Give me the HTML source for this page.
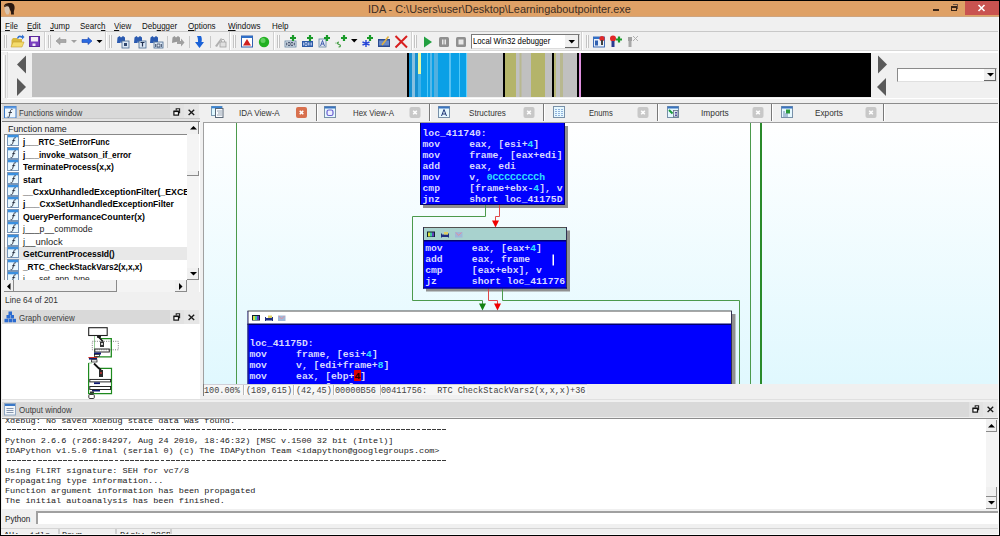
<!DOCTYPE html>
<html><head><meta charset="utf-8">
<style>
*{margin:0;padding:0;box-sizing:border-box}
html,body{width:1000px;height:536px;overflow:hidden;background:#f0f0f0}
body{position:relative;font-family:"Liberation Sans",sans-serif;font-size:9px;color:#000}
.a{position:absolute}
.ui{font-family:"Liberation Sans",sans-serif;white-space:nowrap}
.mono{font-family:"Liberation Mono",monospace;white-space:pre}
.sx{transform:scaleX(0.85);transform-origin:0 0}
.menu{font-size:9.8px;line-height:11px;color:#111;transform:scaleX(0.817);transform-origin:0 0}
.tb{top:32px;width:2px;height:18px;border-left:1px solid #d0d0d0;border-right:1px solid #fff}
.grip{top:35px;width:3px;height:13px;border-left:1px solid #c4c4c4;border-right:1px solid #c4c4c4;background:#fcfcfc}
.sep{top:36px;width:1px;height:12px;background:#c8c8c8}
.tsep{top:104px;width:2px;height:17px;border-left:1px solid #787878;border-right:1px solid #fff}
.sfs{top:385px;width:2px;height:10px;border-left:1px solid #b8b8b8;border-right:1px solid #fff}
.g{font-family:"Liberation Mono",monospace;white-space:pre;font-size:9.72px;line-height:11px;color:#d8d8ff;font-weight:bold}
.g .c{color:#30e0ff}
.st{font-size:8.53px;line-height:10px;color:#444}
.out{font-size:8.53px;line-height:10px;color:#222}
.fr{font-size:9.4px;line-height:12px}

</style></head><body>
<!-- TITLE BAR -->
<div class="a" style="left:1px;top:1px;width:998px;height:16px;background:#dfa166"></div>
<svg class="a" style="left:2px;top:2px" width="14" height="14" viewBox="0 0 14 14">
 <path d="M2 4.5 C2 1.5 6 0.5 9 1 C12 1.5 13 4 12.5 7 C12 9 11.5 10 12 12.5 L9 12.5 C9.5 10 8.5 8 7 7 Z" fill="#2a1810"/>
 <path d="M3 4 C5 3 7 4 7.5 6.5 C8 9 7.5 11 6.5 12.5 L4.5 12.5 C3.5 11 2.5 9 2.5 7 Z" fill="#d8c4b0"/>
 <path d="M2.5 4.5 C3.5 2.5 6 2.5 7.5 4 L6 4.5 C5 4 4 4.2 3 5Z" fill="#3a2418"/>
</svg>
<div class="a ui" style="left:368px;top:2px;font-size:10.9px;color:#3a2c22;line-height:14px">IDA - C:\Users\user\Desktop\Learningaboutpointer.exe</div>
<div class="a" style="left:933px;top:9px;width:6px;height:2px;background:#3a2618"></div>
<div class="a" style="left:951px;top:6px;width:6px;height:5px;border:1px solid #3a2618;border-top-width:2px"></div>
<div class="a" style="left:953px;top:4px;width:5px;height:5px;border-top:1px solid #6a5040;border-right:1px solid #6a5040"></div>
<div class="a" style="left:965px;top:1px;width:34px;height:14px;background:#c95350"></div>
<svg class="a" style="left:977px;top:4px" width="9" height="8" viewBox="0 0 9 8"><path d="M1.5 1 L7.5 7 M7.5 1 L1.5 7" stroke="#fff" stroke-width="1.6"/></svg>
<div class="a" style="left:1px;top:16px;width:998px;height:1px;background:#cfa47e"></div>
<!-- MENU -->
<div class="a" style="left:1px;top:17px;width:997px;height:14px;background:#f0f0f0"></div>
<div class="a ui menu" style="left:5px;top:19.6px"><u>F</u>ile</div>
<div class="a ui menu" style="left:27px;top:19.6px"><u>E</u>dit</div>
<div class="a ui menu" style="left:50px;top:19.6px"><u>J</u>ump</div>
<div class="a ui menu" style="left:80px;top:19.6px">Searc<u>h</u></div>
<div class="a ui menu" style="left:114px;top:19.6px"><u>V</u>iew</div>
<div class="a ui menu" style="left:142px;top:19.6px">Deb<u>u</u>gger</div>
<div class="a ui menu" style="left:188px;top:19.6px"><u>O</u>ptions</div>
<div class="a ui menu" style="left:228px;top:19.6px"><u>W</u>indows</div>
<div class="a ui menu" style="left:272px;top:19.6px">Help</div>
<!-- TOOLBAR -->
<div class="a" style="left:1px;top:31px;width:997px;height:1px;background:#c8c8c8"></div>
<div class="a" style="left:1px;top:32px;width:997px;height:19px;background:#f0f0f0"></div>
<div class="a" style="left:1px;top:50px;width:997px;height:1px;background:#d8d8d8"></div>
<div class="a" style="left:1px;top:51px;width:997px;height:1px;background:#fff"></div>

<!-- toolbar boundaries -->
<div class="a tb" style="left:44px"></div>
<div class="a tb" style="left:105px"></div>
<div class="a tb" style="left:229px"></div>
<div class="a tb" style="left:273px"></div>
<div class="a tb" style="left:411px"></div>
<div class="a tb" style="left:581px"></div>
<div class="a grip" style="left:4px"></div>
<div class="a grip" style="left:48px"></div>
<div class="a grip" style="left:109px"></div>
<div class="a grip" style="left:233px"></div>
<div class="a grip" style="left:277px"></div>
<div class="a grip" style="left:414px"></div>
<div class="a grip" style="left:586px"></div>
<div class="a sep" style="left:167px"></div>
<div class="a sep" style="left:189px"></div>
<div class="a sep" style="left:210px"></div>
<svg class="a" style="left:0;top:31px" width="1000" height="20" viewBox="0 31 1000 20">
 <!-- open folder -->
 <path d="M11.5 40 L13 38 L17 38 L18 39 L22 39 L22 47 L11.5 47Z" fill="#d8b840"/>
 <path d="M11 47 L13 42 L24 42 L22 47Z" fill="#f4dc6c" stroke="#c8a030" stroke-width="0.6"/>
 <path d="M17 38 C18 35 20 35 22 36 L22 34.5 L24.5 37 L22 39.5 L22 38 C20 37 19 37 18 39Z" fill="#3070d0"/>
 <!-- save -->
 <rect x="29" y="36" width="11" height="11" fill="#7a3ec0"/>
 <rect x="31" y="37" width="7" height="4.5" fill="#f4ecf4"/>
 <rect x="32.5" y="43.5" width="3" height="2.5" fill="#f0e8f8"/>
 <rect x="29.5" y="36.5" width="10" height="10" fill="none" stroke="#5a2898" stroke-width="1"/>
 <!-- back gray -->
 <path d="M56 41 L60 37.5 L60 39.5 L66 39.5 L66 42.5 L60 42.5 L60 44.5Z" fill="#a8a8a8" stroke="#909090" stroke-width="0.6"/>
 <path d="M71 40 L77 40 L74 43Z" fill="#a0a0a0"/>
 <!-- forward blue -->
 <path d="M92 41 L88 37.5 L88 39.5 L82 39.5 L82 42.5 L88 42.5 L88 44.5Z" fill="#2a6ae0" stroke="#1040b0" stroke-width="0.6"/>
 <path d="M96.5 40 L102.5 40 L99.5 43Z" fill="#000"/>
 <!-- binoculars x3 -->
 <g id="bino">
 <path d="M117 43 L117.5 37.5 L119.5 36 L121 37.5 L123 36 L125 37.5 L125 43 L121.5 43 L121 41 L120.5 43Z" fill="#2a5ab0"/>
 <rect x="122" y="41" width="7" height="7" fill="#dde8f4" stroke="#4a6a90" stroke-width="0.8"/>
 <rect x="124" y="43" width="3" height="3" fill="#304870"/>
 </g>
 <path d="M134 43 L134.5 37.5 L136.5 36 L138 37.5 L140 36 L142 37.5 L142 43 L138.5 43 L138 41 L137.5 43Z" fill="#2a5ab0"/>
 <rect x="139" y="41" width="7" height="7" fill="#dde8f4" stroke="#4a6a90" stroke-width="0.8"/>
 <path d="M140.5 42.5 L144.5 42.5 M142.5 42.5 L142.5 46.5" stroke="#203050" stroke-width="1.2"/>
 <path d="M150 43 L150.5 37.5 L152.5 36 L154 37.5 L156 36 L158 37.5 L158 43 L154.5 43 L154 41 L153.5 43Z" fill="#2a5ab0"/>
 <rect x="154" y="42" width="9" height="6" fill="#dde8f4" stroke="#4a6a90" stroke-width="0.8"/>
 <path d="M155.5 44 L155.5 47 M157 44 L160 44 L160 47 L157 47Z M161.5 44 L161.5 47" stroke="#203050" stroke-width="0.7" fill="none"/>
 <!-- gray arrow icon -->
 <path d="M172 43 L172.5 37.5 L174.5 36 L176 37.5 L178 36 L180 37.5 L180 41Z" fill="#9a9a9a"/>
 <path d="M177 41 L181 41 L181 38.5 L184.5 42.5 L181 46.5 L181 44 L177 44Z" fill="#a0a0a0"/>
 <!-- blue down arrow -->
 <path d="M197 36 L201 36 C202 38 202 40 201.5 42 L204 42 L199.5 48 L195 42 L198 42 C198 40 198 38 197 36Z" fill="#1a62d8"/>
 <!-- gray lock -->
 <path d="M215 46 L221 38 L222 39 L217 47Z" fill="#b0b0b0"/>
 <rect x="220" y="42" width="6" height="5" fill="#e0e0e0" stroke="#a0a0a0" stroke-width="0.8"/>
 <path d="M221.5 42 L221.5 40.5 C221.5 39 224.5 39 224.5 40.5 L224.5 42" stroke="#a0a0a0" fill="none" stroke-width="0.8"/>
 <!-- window red triangle -->
 <rect x="241.5" y="36" width="11" height="11" fill="#fff" stroke="#3060b0" stroke-width="1"/>
 <rect x="241.5" y="36" width="11" height="2" fill="#3070c8"/>
 <path d="M247 39 L251 45.5 L243 45.5Z" fill="#d02020"/>
 <!-- green circle -->
 <circle cx="264" cy="42" r="5.2" fill="#22b022"/>
 <circle cx="263" cy="40.5" r="2.5" fill="#7ee07e" opacity="0.7"/>
 <!-- 1001 w plus -->
 <rect x="285" y="41" width="11" height="6" fill="#e8eef4" stroke="#6080a0" stroke-width="0.8"/>
 <path d="M286.5 42.5 L286.5 45.5 M288 42.5 L290 42.5 L290 45.5 L288 45.5Z M291 42.5 L293 42.5 L293 45.5 L291 45.5Z M294.5 42.5 L294.5 45.5" stroke="#203050" stroke-width="0.7" fill="none"/>
 <path d="M293 35 L293 41 M290 38 L296 38" stroke="#1a9a2a" stroke-width="2.2"/>
 <rect x="302" y="41" width="11" height="6" fill="#2a5aa8"/>
 <path d="M303.5 42.5 L303.5 45.5 M305 42.5 L307 42.5 L307 45.5 L305 45.5Z M308.5 42.5 L308.5 45.5 M310 42.5 L310 45.5 M311.5 42.5 L311.5 45.5" stroke="#e0e8ff" stroke-width="0.7" fill="none"/>
 <path d="M310 35 L310 41 M307 38 L313 38" stroke="#1a9a2a" stroke-width="2.2"/>
 <rect x="319" y="39" width="7" height="8" fill="#e8eef4" stroke="#6080a0" stroke-width="0.8"/>
 <path d="M320.5 46 L322.5 40.5 L324.5 46 M321.3 44 L323.7 44" stroke="#2040a0" stroke-width="0.8" fill="none"/>
 <path d="M327 35 L327 41 M324 38 L330 38" stroke="#1a9a2a" stroke-width="2.2"/>
 <path d="M339 42 C337 42 337 44 339 44.5 C341 45 341 47 338.5 47" stroke="#3a9a3a" stroke-width="1.2" fill="none"/>
 <circle cx="336" cy="43" r="0.6" fill="#3a9a3a"/>
 <path d="M344 35 L344 41 M341 38 L347 38" stroke="#1a9a2a" stroke-width="2.2"/>
 <path d="M351 39 L357.5 39 L354.2 42.5Z" fill="#000"/>
 <path d="M366 40 L366 47 M362.5 42 L369.5 45 M362.5 45 L369.5 42" stroke="#2848d8" stroke-width="1.4"/>
 <path d="M370 35 L370 41 M367 38 L373 38" stroke="#1a9a2a" stroke-width="2.2"/>
 <rect x="378" y="39" width="12" height="8" fill="#2a4a90"/>
 <rect x="379" y="40.5" width="10" height="5" fill="#6888c8"/>
 <path d="M382 45 L388.5 36.5" stroke="#e0b040" stroke-width="1.6"/>
 <path d="M395.5 36 L407 47.5 M407 36 L395.5 47.5" stroke="#d82020" stroke-width="2"/>
 <!-- play pause stop -->
 <path d="M424 36.5 L432 42 L424 47.5Z" fill="#22a040"/>
 <rect x="439" y="37" width="10" height="10" rx="1.5" fill="#909090"/>
 <rect x="442" y="39.5" width="1.5" height="5" fill="#e8e8e8"/><rect x="444.5" y="39.5" width="1.5" height="5" fill="#e8e8e8"/>
 <rect x="456" y="37" width="10" height="10" rx="1.5" fill="#909090"/>
 <rect x="458.5" y="39.5" width="5" height="5" fill="#e8e8e8"/>
 <!-- debugger icons -->
 <rect x="593.5" y="37" width="11" height="10" fill="#e8f0fa" stroke="#3060b0" stroke-width="0.9"/>
 <rect x="593.5" y="37" width="11" height="2" fill="#3070c8"/>
 <rect x="595" y="40.5" width="3" height="5" fill="#3060b0"/>
 <circle cx="602" cy="38.5" r="2.6" fill="#e02828"/>
 <rect x="601" y="40" width="2" height="5" fill="#404040"/>
 <circle cx="613" cy="38.5" r="3" fill="#e02828"/>
 <rect x="611.5" y="41" width="3" height="6" fill="#2a3a90"/>
 <path d="M619 36.5 L619 42.5 M616 39.5 L622 39.5" stroke="#1a9a2a" stroke-width="2.2"/>
 <rect x="628" y="37" width="4" height="4" fill="#a0a0a0"/>
 <rect x="628.5" y="41" width="3" height="6" fill="#a8a8a8"/>
 <path d="M633 36 L638 41 M638 36 L633 41" stroke="#b0b0b0" stroke-width="1"/>
</svg>
<!-- combobox -->
<div class="a" style="left:471px;top:34px;width:109px;height:15px;background:#fff;border:1px solid #7a7a7a;border-right-color:#dcdcdc;border-bottom-color:#dcdcdc"></div>
<div class="a ui" style="left:472.5px;top:36px;font-size:9.2px;line-height:11px;color:#000;transform:scaleX(0.84);transform-origin:0 0">Local Win32 debugger</div>
<div class="a" style="left:565px;top:35px;width:14px;height:13px;background:#f0f0f0;border-right:1px solid #696969;border-bottom:1px solid #696969"></div>
<svg class="a" style="left:568px;top:40px" width="8" height="4"><path d="M0.5 0 L7 0 L3.75 3.5Z" fill="#000"/></svg>

<!-- NAV BAND -->
<div class="a" style="left:1px;top:52px;width:997px;height:51px;background:#f0f0f0"></div>
<div class="a" style="left:3px;top:55px;width:3px;height:43px;border-left:1px solid #fff;border-right:1px solid #c8c8c8"></div>
<div class="a" style="left:7px;top:52px;width:991px;height:1px;background:#fff"></div>
<div class="a" style="left:7px;top:52px;width:1px;height:47px;background:#dcdcdc"></div>
<div class="a" style="left:7px;top:98px;width:991px;height:1px;background:#fff"></div>
<svg class="a" style="left:0;top:52px" width="1000" height="50" viewBox="0 52 1000 50">
 <path d="M26 55.5 L26 73.5 L17 64.5Z" fill="#5a5a5a"/>
 <path d="M17 78 L17 96 L26 87Z" fill="#5a5a5a"/>
 <path d="M878 55.5 L878 73.5 L887 64.5Z" fill="#5a5a5a"/>
 <path d="M886 78 L886 96 L877 87Z" fill="#5a5a5a"/>
 <rect x="32" y="53" width="839" height="44" fill="#c0c0c0"/>
 <rect x="407" y="53" width="2" height="44" fill="#000"/>
 <rect x="409" y="53" width="58" height="44" fill="#0aa0e6"/>
 <rect x="409" y="53" width="3" height="44" fill="#1890d0"/>
 <rect x="412" y="53" width="3" height="44" fill="#88c0e0"/>
 <rect x="415" y="53" width="3" height="44" fill="#1890d0"/>
 <rect x="418" y="53" width="3" height="21" fill="#e8f8a0"/>
 <rect x="418" y="74" width="3" height="23" fill="#40b0e8"/>
 <rect x="427" y="53" width="1" height="44" fill="#50c8f8"/>
 <rect x="430" y="53" width="2" height="44" fill="#58b8e8"/>
 <rect x="434" y="53" width="4" height="44" fill="#50b0e0"/>
 <rect x="449" y="53" width="2" height="44" fill="#58c0f0"/>
 <rect x="459" y="53" width="1" height="44" fill="#50c8f8"/>
 <rect x="466" y="53" width="1" height="44" fill="#60d0ff"/>
 <rect x="503" y="53" width="2" height="44" fill="#000"/>
 <rect x="505" y="53" width="11" height="44" fill="#b4b46a"/>
 <rect x="519.5" y="53" width="2" height="44" fill="#b8b890"/>
 <rect x="531" y="53" width="14" height="44" fill="#b4b46a"/>
 <rect x="552" y="53" width="2" height="44" fill="#000"/>
 <rect x="554" y="53" width="2" height="44" fill="#b8b878"/>
 <rect x="560" y="53" width="3" height="44" fill="#b8b890"/>
 <rect x="577" y="53" width="2" height="44" fill="#000"/>
 <rect x="579" y="53" width="2" height="44" fill="#e090e0"/>
 <rect x="581" y="53" width="290" height="44" fill="#000"/>
</svg>
<div class="a" style="left:897px;top:68px;width:100px;height:14px;background:#fff;border:1px solid #8a8a8a;border-right-color:#e0e0e0;border-bottom-color:#e0e0e0"></div>
<div class="a" style="left:984px;top:69px;width:12px;height:12px;background:#f0f0f0;border-right:1px solid #696969;border-bottom:1px solid #696969"></div>
<svg class="a" style="left:987px;top:73px" width="7" height="4"><path d="M0 0 L7 0 L3.5 3.5Z" fill="#000"/></svg>
<div class="a" style="left:1px;top:103px;width:997px;height:1px;background:#8c8c8c"></div>

<!-- LEFT DOCK -->
<div class="a" style="left:1px;top:104px;width:201px;height:296px;background:#f0f0f0"></div>
<!-- Functions title -->
<div class="a" style="left:2px;top:104px;width:197px;height:14.5px;background:#d9d9d9"></div>
<div class="a" style="left:170px;top:104px;width:14px;height:14.5px;background:#e2e2e2"></div>
<div class="a" style="left:184px;top:104px;width:15px;height:14.5px;background:#e6e6e6"></div>
<svg class="a" style="left:4px;top:106px" width="13" height="13" viewBox="0 0 13 13">
 <rect x="0.5" y="0.5" width="11.5" height="11.5" fill="#eef6fc" stroke="#3a78c8" stroke-width="1"/>
 <rect x="0.5" y="0.5" width="11.5" height="2" fill="#5a98e0"/>
 <path d="M8.5 3.5 C7 3 6.5 4 6.2 6 L5.2 10.5 C5 11.5 4 11.5 3.5 11 M4.5 6.5 L8 6.5" stroke="#303848" stroke-width="0.9" fill="none"/>
</svg>
<div class="a ui sx" style="left:19px;top:106.5px;font-size:9.4px;line-height:12px;color:#3c3c3c">Functions window</div>
<svg class="a" style="left:173px;top:108px" width="8" height="8" viewBox="0 0 8 8"><path d="M3.2 2.6 L3.2 0.8 L6.6 0.8 L6.6 4.6 L5.4 4.6" fill="none" stroke="#222" stroke-width="1.1"/><rect x="0.9" y="3.2" width="4.6" height="3.9" fill="#fff" stroke="#111" stroke-width="1.2"/><rect x="0.9" y="2.8" width="4.6" height="1.3" fill="#111"/></svg>
<svg class="a" style="left:188px;top:109px" width="7" height="7" viewBox="0 0 7 7"><path d="M0.6 0.8 L6.2 6 M6.2 0.8 L0.6 6" stroke="#1a1a1a" stroke-width="1.35"/></svg>
<div class="a" style="left:2px;top:118px;width:198px;height:1px;background:#c8c8c8"></div><div class="a" style="left:2px;top:119px;width:198px;height:2px;background:#e4e4e4"></div><div class="a" style="left:2px;top:121px;width:198px;height:1px;background:#7c7c7c"></div>
<!-- list area -->
<div class="a" style="left:2px;top:122px;width:198px;height:171px;background:#f0f0f0"></div><div class="a" style="left:4px;top:122px;width:196px;height:171px;background:#fff;border-left:1px solid #909090"></div>
<div class="a" style="left:4px;top:122px;width:183px;height:13px;background:#f0f0f0;border-bottom:1px solid #888"></div>
<div class="a ui" style="left:8px;top:123px;font-size:9.4px;line-height:12px;color:#222;transform:scaleX(0.948);transform-origin:0 0">Function name</div>
<div class="a" style="left:187px;top:122px;width:12px;height:13px;background:#f0f0f0;border-right:1px solid #8a8a8a;border-bottom:1px solid #8a8a8a"></div>
<svg class="a" style="left:190px;top:126px" width="7" height="4"><path d="M0 3.5 L7 3.5 L3.5 0Z" fill="#000"/></svg>
<div class="a" style="left:187px;top:134px;width:12px;height:146px;background:#f4f4f4"></div>
<div class="a" style="left:187px;top:171px;width:12px;height:5px;background:#f0f0f0;border-right:1px solid #8a8a8a;border-bottom:1px solid #8a8a8a"></div>
<div class="a" style="left:187px;top:268px;width:12px;height:12px;background:#f0f0f0;border-right:1px solid #8a8a8a;border-bottom:1px solid #8a8a8a"></div>
<svg class="a" style="left:190px;top:272px" width="7" height="4"><path d="M0 0 L7 0 L3.5 3.5Z" fill="#000"/></svg>
<div id="rows" class="a" style="left:4px;top:134px;width:183px;height:145.5px;overflow:hidden"><svg class="a" style="left:3px;top:0.30px" width="12" height="12" viewBox="0 0 12 12"><rect x="0.5" y="0.5" width="11" height="11" fill="#eaf8ff" stroke="#7896b8" stroke-width="1"/><rect x="1" y="1" width="10" height="2.3" fill="#3a90e0"/><path d="M8.9 4 C8.2 3.4 7.3 3.6 7 4.6 L5.6 9.6 C5.3 10.6 4.5 10.9 3.6 10.4" stroke="#20283a" stroke-width="0.9" fill="none"/><path d="M5.2 6.6 L8.2 6.6" stroke="#20283a" stroke-width="0.8"/></svg>
<div class="a ui fr" style="left:19px;top:2.30px;font-weight:bold;color:#000;transform:scaleX(0.843);transform-origin:0 0">j___RTC_SetErrorFunc</div>
<svg class="a" style="left:3px;top:12.72px" width="12" height="12" viewBox="0 0 12 12"><rect x="0.5" y="0.5" width="11" height="11" fill="#eaf8ff" stroke="#7896b8" stroke-width="1"/><rect x="1" y="1" width="10" height="2.3" fill="#3a90e0"/><path d="M8.9 4 C8.2 3.4 7.3 3.6 7 4.6 L5.6 9.6 C5.3 10.6 4.5 10.9 3.6 10.4" stroke="#20283a" stroke-width="0.9" fill="none"/><path d="M5.2 6.6 L8.2 6.6" stroke="#20283a" stroke-width="0.8"/></svg>
<div class="a ui fr" style="left:19px;top:14.72px;font-weight:bold;color:#000;transform:scaleX(0.877);transform-origin:0 0">j___invoke_watson_if_error</div>
<svg class="a" style="left:3px;top:25.14px" width="12" height="12" viewBox="0 0 12 12"><rect x="0.5" y="0.5" width="11" height="11" fill="#eaf8ff" stroke="#7896b8" stroke-width="1"/><rect x="1" y="1" width="10" height="2.3" fill="#3a90e0"/><path d="M8.9 4 C8.2 3.4 7.3 3.6 7 4.6 L5.6 9.6 C5.3 10.6 4.5 10.9 3.6 10.4" stroke="#20283a" stroke-width="0.9" fill="none"/><path d="M5.2 6.6 L8.2 6.6" stroke="#20283a" stroke-width="0.8"/></svg>
<div class="a ui fr" style="left:19px;top:27.14px;font-weight:bold;color:#000;transform:scaleX(0.91);transform-origin:0 0">TerminateProcess(x,x)</div>
<svg class="a" style="left:3px;top:37.56px" width="12" height="12" viewBox="0 0 12 12"><rect x="0.5" y="0.5" width="11" height="11" fill="#eaf8ff" stroke="#7896b8" stroke-width="1"/><rect x="1" y="1" width="10" height="2.3" fill="#3a90e0"/><path d="M8.9 4 C8.2 3.4 7.3 3.6 7 4.6 L5.6 9.6 C5.3 10.6 4.5 10.9 3.6 10.4" stroke="#20283a" stroke-width="0.9" fill="none"/><path d="M5.2 6.6 L8.2 6.6" stroke="#20283a" stroke-width="0.8"/></svg>
<div class="a ui fr" style="left:19px;top:39.56px;font-weight:bold;color:#000;transform:scaleX(0.93);transform-origin:0 0">start</div>
<svg class="a" style="left:3px;top:49.98px" width="12" height="12" viewBox="0 0 12 12"><rect x="0.5" y="0.5" width="11" height="11" fill="#eaf8ff" stroke="#7896b8" stroke-width="1"/><rect x="1" y="1" width="10" height="2.3" fill="#3a90e0"/><path d="M8.9 4 C8.2 3.4 7.3 3.6 7 4.6 L5.6 9.6 C5.3 10.6 4.5 10.9 3.6 10.4" stroke="#20283a" stroke-width="0.9" fill="none"/><path d="M5.2 6.6 L8.2 6.6" stroke="#20283a" stroke-width="0.8"/></svg>
<div class="a ui fr" style="left:19px;top:51.98px;font-weight:bold;color:#000;transform:scaleX(0.935);transform-origin:0 0">__CxxUnhandledExceptionFilter(_EXCEPTION_POINTERS *)</div>
<svg class="a" style="left:3px;top:62.40px" width="12" height="12" viewBox="0 0 12 12"><rect x="0.5" y="0.5" width="11" height="11" fill="#eaf8ff" stroke="#7896b8" stroke-width="1"/><rect x="1" y="1" width="10" height="2.3" fill="#3a90e0"/><path d="M8.9 4 C8.2 3.4 7.3 3.6 7 4.6 L5.6 9.6 C5.3 10.6 4.5 10.9 3.6 10.4" stroke="#20283a" stroke-width="0.9" fill="none"/><path d="M5.2 6.6 L8.2 6.6" stroke="#20283a" stroke-width="0.8"/></svg>
<div class="a ui fr" style="left:19px;top:64.40px;font-weight:bold;color:#000;transform:scaleX(0.908);transform-origin:0 0">j___CxxSetUnhandledExceptionFilter</div>
<svg class="a" style="left:3px;top:74.82px" width="12" height="12" viewBox="0 0 12 12"><rect x="0.5" y="0.5" width="11" height="11" fill="#eaf8ff" stroke="#7896b8" stroke-width="1"/><rect x="1" y="1" width="10" height="2.3" fill="#3a90e0"/><path d="M8.9 4 C8.2 3.4 7.3 3.6 7 4.6 L5.6 9.6 C5.3 10.6 4.5 10.9 3.6 10.4" stroke="#20283a" stroke-width="0.9" fill="none"/><path d="M5.2 6.6 L8.2 6.6" stroke="#20283a" stroke-width="0.8"/></svg>
<div class="a ui fr" style="left:19px;top:76.82px;font-weight:bold;color:#000;transform:scaleX(0.925);transform-origin:0 0">QueryPerformanceCounter(x)</div>
<svg class="a" style="left:3px;top:87.24px" width="12" height="12" viewBox="0 0 12 12"><rect x="0.5" y="0.5" width="11" height="11" fill="#eaf8ff" stroke="#7896b8" stroke-width="1"/><rect x="1" y="1" width="10" height="2.3" fill="#3a90e0"/><path d="M8.9 4 C8.2 3.4 7.3 3.6 7 4.6 L5.6 9.6 C5.3 10.6 4.5 10.9 3.6 10.4" stroke="#20283a" stroke-width="0.9" fill="none"/><path d="M5.2 6.6 L8.2 6.6" stroke="#20283a" stroke-width="0.8"/></svg>
<div class="a ui fr" style="left:19px;top:89.24px;font-weight:normal;color:#1c1c1c;transform:scaleX(0.934);transform-origin:0 0">j___p__commode</div>
<svg class="a" style="left:3px;top:99.66px" width="12" height="12" viewBox="0 0 12 12"><rect x="0.5" y="0.5" width="11" height="11" fill="#eaf8ff" stroke="#7896b8" stroke-width="1"/><rect x="1" y="1" width="10" height="2.3" fill="#3a90e0"/><path d="M8.9 4 C8.2 3.4 7.3 3.6 7 4.6 L5.6 9.6 C5.3 10.6 4.5 10.9 3.6 10.4" stroke="#20283a" stroke-width="0.9" fill="none"/><path d="M5.2 6.6 L8.2 6.6" stroke="#20283a" stroke-width="0.8"/></svg>
<div class="a ui fr" style="left:19px;top:101.66px;font-weight:normal;color:#1c1c1c;transform:scaleX(0.999);transform-origin:0 0">j__unlock</div>
<div class="a" style="left:1px;top:112.68px;width:182px;height:13px;background:#e8e8e8"></div>
<svg class="a" style="left:3px;top:112.08px" width="12" height="12" viewBox="0 0 12 12"><rect x="0.5" y="0.5" width="11" height="11" fill="#eaf8ff" stroke="#7896b8" stroke-width="1"/><rect x="1" y="1" width="10" height="2.3" fill="#3a90e0"/><path d="M8.9 4 C8.2 3.4 7.3 3.6 7 4.6 L5.6 9.6 C5.3 10.6 4.5 10.9 3.6 10.4" stroke="#20283a" stroke-width="0.9" fill="none"/><path d="M5.2 6.6 L8.2 6.6" stroke="#20283a" stroke-width="0.8"/></svg>
<div class="a ui fr" style="left:19px;top:114.08px;font-weight:bold;color:#000;transform:scaleX(0.912);transform-origin:0 0">GetCurrentProcessId()</div>
<svg class="a" style="left:3px;top:124.50px" width="12" height="12" viewBox="0 0 12 12"><rect x="0.5" y="0.5" width="11" height="11" fill="#eaf8ff" stroke="#7896b8" stroke-width="1"/><rect x="1" y="1" width="10" height="2.3" fill="#3a90e0"/><path d="M8.9 4 C8.2 3.4 7.3 3.6 7 4.6 L5.6 9.6 C5.3 10.6 4.5 10.9 3.6 10.4" stroke="#20283a" stroke-width="0.9" fill="none"/><path d="M5.2 6.6 L8.2 6.6" stroke="#20283a" stroke-width="0.8"/></svg>
<div class="a ui fr" style="left:19px;top:126.50px;font-weight:bold;color:#000;transform:scaleX(0.883);transform-origin:0 0">_RTC_CheckStackVars2(x,x,x)</div>
<svg class="a" style="left:3px;top:136.92px" width="12" height="12" viewBox="0 0 12 12"><rect x="0.5" y="0.5" width="11" height="11" fill="#eaf8ff" stroke="#7896b8" stroke-width="1"/><rect x="1" y="1" width="10" height="2.3" fill="#3a90e0"/><path d="M8.9 4 C8.2 3.4 7.3 3.6 7 4.6 L5.6 9.6 C5.3 10.6 4.5 10.9 3.6 10.4" stroke="#20283a" stroke-width="0.9" fill="none"/><path d="M5.2 6.6 L8.2 6.6" stroke="#20283a" stroke-width="0.8"/></svg>
<div class="a ui fr" style="left:19px;top:138.92px;font-weight:normal;color:#1c1c1c;transform:scaleX(0.9);transform-origin:0 0">j___set_app_type</div>
<svg class="a" style="left:3px;top:149.34px" width="12" height="12" viewBox="0 0 12 12"><rect x="0.5" y="0.5" width="11" height="11" fill="#eaf8ff" stroke="#7896b8" stroke-width="1"/><rect x="1" y="1" width="10" height="2.3" fill="#3a90e0"/><path d="M8.9 4 C8.2 3.4 7.3 3.6 7 4.6 L5.6 9.6 C5.3 10.6 4.5 10.9 3.6 10.4" stroke="#20283a" stroke-width="0.9" fill="none"/><path d="M5.2 6.6 L8.2 6.6" stroke="#20283a" stroke-width="0.8"/></svg>
<div class="a ui fr" style="left:19px;top:151.34px;font-weight:normal;color:#1c1c1c;transform:scaleX(0.9);transform-origin:0 0">j___lock</div></div>
<!-- hscroll -->
<div class="a" style="left:4px;top:280px;width:183px;height:12px;background:#f4f4f4"></div>
<div class="a" style="left:4px;top:280px;width:10px;height:12px;background:#f0f0f0;border-right:1px solid #8a8a8a;border-bottom:1px solid #8a8a8a"></div>
<svg class="a" style="left:7px;top:283px" width="4" height="7"><path d="M3.5 0 L3.5 7 L0 3.5Z" fill="#000"/></svg>
<div class="a" style="left:14px;top:280px;width:103px;height:12px;background:#f0f0f0;border-right:1px solid #8a8a8a;border-bottom:1px solid #8a8a8a"></div>
<div class="a" style="left:175px;top:280px;width:12px;height:12px;background:#f0f0f0;border-right:1px solid #8a8a8a;border-bottom:1px solid #8a8a8a"></div>
<svg class="a" style="left:179px;top:283px" width="4" height="7"><path d="M0 0 L0 7 L3.5 3.5Z" fill="#000"/></svg>
<div class="a" style="left:187px;top:280px;width:12px;height:12px;background:#f0f0f0"></div>
<div class="a" style="left:3px;top:292px;width:197px;height:18px;background:#f0f0f0"></div>
<div class="a ui" style="left:5px;top:294.2px;font-size:9.4px;line-height:12px;color:#333;transform:scaleX(0.89);transform-origin:0 0">Line 64 of 201</div>
<!-- Graph overview -->
<div class="a" style="left:2px;top:310px;width:197px;height:14px;background:#d9d9d9"></div>
<div class="a" style="left:170px;top:310px;width:14px;height:14px;background:#e2e2e2"></div>
<div class="a" style="left:184px;top:310px;width:15px;height:14px;background:#e6e6e6"></div>
<svg class="a" style="left:4px;top:311px" width="13" height="12" viewBox="0 0 13 12">
 <g fill="#2a6ad0"><rect x="4.5" y="0.5" width="3.5" height="3.5"/><rect x="2.5" y="4" width="3.5" height="3.5"/><rect x="6.5" y="4" width="3.5" height="3.5"/><rect x="0.5" y="7.8" width="3.5" height="3.5"/><rect x="4.5" y="7.8" width="3.5" height="3.5"/><rect x="8.5" y="7.8" width="3.5" height="3.5"/></g>
</svg>
<div class="a ui sx" style="left:19px;top:311.5px;font-size:9.4px;line-height:12px;color:#3c3c3c">Graph overview</div>
<svg class="a" style="left:173px;top:313px" width="8" height="8" viewBox="0 0 8 8"><path d="M3.2 2.6 L3.2 0.8 L6.6 0.8 L6.6 4.6 L5.4 4.6" fill="none" stroke="#222" stroke-width="1.1"/><rect x="0.9" y="3.2" width="4.6" height="3.9" fill="#fff" stroke="#111" stroke-width="1.2"/><rect x="0.9" y="2.8" width="4.6" height="1.3" fill="#111"/></svg>
<svg class="a" style="left:188px;top:314px" width="7" height="7" viewBox="0 0 7 7"><path d="M0.6 0.8 L6.2 6 M6.2 0.8 L0.6 6" stroke="#1a1a1a" stroke-width="1.35"/></svg>
<div class="a" style="left:2px;top:324px;width:198px;height:76px;background:#fff"></div>
<svg class="a" style="left:80px;top:324px" width="50" height="76" viewBox="80 324 50 76">
 <rect x="88.7" y="327.7" width="18.5" height="7.8" fill="#fff" stroke="#222" stroke-width="1.1"/>
 <path d="M94.5 336 L94.5 357" stroke="#7cc07c" stroke-width="0.8" fill="none"/>
 <path d="M101 338.7 L111.3 338.7 L111.3 356.8 L96 356.8" stroke="#1e8a1e" stroke-width="1.3" fill="none"/>
 <rect x="97" y="335.3" width="4" height="2.5" fill="#222"/>
 <path d="M98.5 337 L103 341.5" stroke="#111" stroke-width="1.6"/>
 <rect x="100" y="341.5" width="4" height="5.5" fill="#333"/>
 <rect x="101" y="343" width="2" height="2" fill="#ccc"/>
 <rect x="94.8" y="349" width="14.5" height="3" fill="#fff" stroke="#111" stroke-width="0.9"/>
 <rect x="94" y="352.5" width="7" height="2" fill="#101a70"/>
 <rect x="94.5" y="354.5" width="5" height="2" fill="#fff" stroke="#111" stroke-width="0.7"/>
 <rect x="92.3" y="341.3" width="26" height="8.5" fill="none" stroke="#444" stroke-width="0.7" stroke-dasharray="1 1.3"/>
 <rect x="88.4" y="357" width="9" height="1.2" fill="#d03020"/>
 <rect x="89" y="358" width="8" height="1.6" fill="#101a70"/>
 <rect x="91.5" y="359.8" width="5.5" height="2.2" fill="#fff" stroke="#111" stroke-width="0.7"/>
 <path d="M88.6 363 L88.6 393.7 L111.5 393.7 L111.5 368.4 L99 368.4" stroke="#1e8a1e" stroke-width="1.2" fill="none"/>
 <path d="M88.6 363 L92 363" stroke="#7cc07c" stroke-width="0.8"/>
 <path d="M94 363.5 L98 367.5 L101 370" stroke="#111" stroke-width="1.8"/>
 <rect x="99" y="370" width="4" height="7" fill="#2a2a2a"/>
 <rect x="100" y="372" width="2" height="2" fill="#a03030"/>
 <rect x="89.8" y="379.4" width="20.8" height="2.5" fill="#fff" stroke="#111" stroke-width="0.9"/>
 <rect x="94" y="382.3" width="6" height="1.8" fill="#101a70"/>
 <rect x="89.8" y="386.5" width="20.8" height="3" fill="#fff" stroke="#111" stroke-width="0.9"/>
 <rect x="92" y="390" width="8" height="1.5" fill="#101a70"/>
 <rect x="90" y="391.5" width="4" height="2" fill="#333"/>
 <rect x="88.8" y="394.5" width="5.5" height="4" rx="1" fill="#fff" stroke="#222" stroke-width="0.9"/>
</svg>

<!-- TABS -->
<div class="a" style="left:202px;top:104px;width:796px;height:18px;background:#f0f0f0"></div>
<div class="a tsep" style="left:316px"></div>
<div class="a tsep" style="left:429px"></div>
<div class="a tsep" style="left:543px"></div>
<div class="a tsep" style="left:657px"></div>
<div class="a tsep" style="left:771px"></div>
<div class="a tsep" style="left:883px"></div>
<svg class="a" style="left:200px;top:104px" width="800" height="18" viewBox="200 104 800 18">
 <!-- IDA view icon -->
 <rect x="211.5" y="106.5" width="10.5" height="9" fill="#e0f8ff" stroke="#7a98b0" stroke-width="1"/>
 <rect x="211.5" y="106.3" width="10.5" height="2" fill="#3a84d4"/>
 <rect x="215.5" y="108.5" width="7.5" height="9" fill="#fafcff" stroke="#5a6878" stroke-width="1"/>
 <path d="M217 111 L222 111 M218 113 L222 113 M217 115 L222 115" stroke="#8090a0" stroke-width="0.8"/>
 <rect x="296" y="107" width="11" height="11" rx="2" fill="#d8704e"/>
 <path d="M299.7 110.7 L303.3 114.3 M303.3 110.7 L299.7 114.3" stroke="#fff" stroke-width="1.6"/>
 <!-- hex -->
 <rect x="324.5" y="106.5" width="11" height="11" fill="#e6f8ff" stroke="#7890a8" stroke-width="1"/>
 <rect x="324.5" y="106.5" width="11" height="2" fill="#3a74c0"/>
 <rect x="327" y="110" width="6" height="5.5" rx="1.8" fill="#eef0ff" stroke="#6a60d0" stroke-width="1.2"/>
 <rect x="409.5" y="107" width="11" height="11" rx="2" fill="#c8c8c8"/>
 <path d="M413.2 110.7 L416.8 114.3 M416.8 110.7 L413.2 114.3" stroke="#fff" stroke-width="1.6"/>
 <!-- structures -->
 <rect x="438.5" y="106.5" width="11" height="11" fill="#e6f8ff" stroke="#7890a8" stroke-width="1"/>
 <rect x="438.5" y="106.5" width="11" height="2" fill="#3a74c0"/>
 <path d="M441.5 116 L444 109.5 L446.5 116 M442.3 114 L445.7 114" stroke="#203878" stroke-width="1" fill="none"/>
 <rect x="523.5" y="107" width="11" height="11" rx="2" fill="#c8c8c8"/>
 <path d="M527.2 110.7 L530.8 114.3 M530.8 110.7 L527.2 114.3" stroke="#fff" stroke-width="1.6"/>
 <!-- enums -->
 <rect x="553.5" y="106.5" width="11" height="11" fill="#e6f8ff" stroke="#7890a8" stroke-width="1"/>
 <path d="M556 109 L556 116 M559 109 L559 116 M562 109 L562 116" stroke="#3a6ab8" stroke-width="1" stroke-dasharray="1 1"/>
 <rect x="637.5" y="107" width="11" height="11" rx="2" fill="#c8c8c8"/>
 <path d="M641.2 110.7 L644.8 114.3 M644.8 110.7 L641.2 114.3" stroke="#fff" stroke-width="1.6"/>
 <!-- imports -->
 <rect x="667.5" y="106.5" width="11" height="11" fill="#e6f8ff" stroke="#7890a8" stroke-width="1"/>
 <rect x="667.5" y="106.5" width="11" height="2" fill="#3a74c0"/>
 <path d="M669 110 L672.5 113.5" stroke="#1a9a3a" stroke-width="2"/>
 <rect x="673.5" y="110.5" width="4.5" height="6.5" fill="#dde8f0" stroke="#607080" stroke-width="0.8"/>
 <rect x="675" y="112" width="2" height="1.5" fill="#5a50a0"/><rect x="675" y="114.5" width="2" height="1.5" fill="#5a50a0"/>
 <rect x="752.5" y="107" width="11" height="11" rx="2" fill="#c8c8c8"/>
 <path d="M756.2 110.7 L759.8 114.3 M759.8 110.7 L756.2 114.3" stroke="#fff" stroke-width="1.6"/>
 <!-- exports -->
 <rect x="781.5" y="106.5" width="11" height="11" fill="#e6f8ff" stroke="#7890a8" stroke-width="1"/>
 <rect x="781.5" y="106.5" width="11" height="2" fill="#3a74c0"/>
 <rect x="786" y="109.5" width="4" height="4" fill="#2a9a3a"/>
 <path d="M783 112 L785 112 M783 114 L788 114 M783 116 L788 116" stroke="#4a6a98" stroke-width="0.8"/>
 <rect x="865.5" y="107" width="11" height="11" rx="2" fill="#c8c8c8"/>
 <path d="M869.2 110.7 L872.8 114.3 M872.8 110.7 L869.2 114.3" stroke="#fff" stroke-width="1.6"/>
</svg>
<div class="a ui" style="left:239px;top:107px;font-size:8.6px;line-height:12px;color:#333;transform:scaleX(0.94);transform-origin:0 0">IDA View-A</div>
<div class="a ui" style="left:352.5px;top:107px;font-size:8.6px;line-height:12px;color:#333;transform:scaleX(0.914);transform-origin:0 0">Hex View-A</div>
<div class="a ui" style="left:468.5px;top:107px;font-size:8.6px;line-height:12px;color:#333;transform:scaleX(0.942);transform-origin:0 0">Structures</div>
<div class="a ui" style="left:588.7px;top:107px;font-size:8.6px;line-height:12px;color:#333;transform:scaleX(0.89);transform-origin:0 0">Enums</div>
<div class="a ui" style="left:700.8px;top:107px;font-size:8.6px;line-height:12px;color:#333;transform:scaleX(0.97);transform-origin:0 0">Imports</div>
<div class="a ui" style="left:814.8px;top:107px;font-size:8.6px;line-height:12px;color:#333;transform:scaleX(0.957);transform-origin:0 0">Exports</div>
<!-- GRAPH -->
<div class="a" style="left:203px;top:122px;width:795px;height:263px;background:#a0a0a0"></div>
<div class="a" style="left:204px;top:123px;width:794px;height:261px;background:linear-gradient(#ffffff,#e0f8fe)"></div>
<svg class="a" style="left:204px;top:123px" width="794" height="261" viewBox="204 123 794 261">
 <!-- block shadows -->
 <rect x="423" y="126" width="145" height="82" fill="#909090"/>
 <rect x="426" y="230.5" width="144" height="61" fill="#909090"/>
 <rect x="250.5" y="314" width="485" height="80" fill="#909090"/>
 <g fill="none" stroke="#4c9a4c" stroke-width="1">
  <path d="M236.5 123 L236.5 384"/>
  <path d="M485.5 205 L485.5 216.5 L412.5 216.5 L412.5 300.5 L482.5 300.5 L482.5 304"/>
  <path d="M502.5 288 L502.5 300.5 L739.5 300.5 L739.5 384"/>
  <path d="M750.5 123 L750.5 384"/>
 </g>
 <path d="M761 123 L761 384" stroke="#2a8a2a" stroke-width="2"/>
 <g fill="none" stroke="#e04848" stroke-width="1">
  <path d="M499.5 205 L499.5 216.5 L495.5 216.5 L495.5 221"/>
  <path d="M488.5 288 L488.5 300.5 L497.5 300.5 L497.5 304"/>
 </g>
 <path d="M492 220.5 L499 220.5 L495.5 227.5Z" fill="#f00000"/>
 <path d="M494 303.5 L501 303.5 L497.5 310.5Z" fill="#f00000"/>
 <path d="M479 303.5 L486 303.5 L482.5 310.5Z" fill="#108010"/>
 <!-- block 1 -->
 <rect x="420" y="123" width="145" height="82" fill="#0000ff"/>
 <rect x="420" y="204" width="145" height="1" fill="#000070"/>
 <rect x="564" y="123" width="1" height="82" fill="#000070"/>
 <rect x="420" y="123" width="1" height="82" fill="#000070"/>
 <!-- block 2 -->
 <rect x="423" y="227.5" width="144" height="61" fill="#0000ff"/>
 <rect x="423" y="227" width="144" height="14" fill="#a8d2ce"/>
 <rect x="423" y="227" width="144" height="1" fill="#505050"/>
 <rect x="423" y="240" width="144" height="1.5" fill="#000070"/>
 <rect x="423" y="227" width="1" height="61.5" fill="#303050"/>
 <rect x="566" y="227" width="1" height="61.5" fill="#303050"/>
 <rect x="423" y="287.5" width="144" height="1" fill="#000070"/>
 <!-- block 3 -->
 <rect x="247.5" y="311" width="484.5" height="80" fill="#0000ff"/>
 <rect x="247.5" y="311" width="484.5" height="13" fill="#ffffff"/>
 <rect x="247.5" y="310.5" width="484.5" height="1" fill="#505050"/>
 <rect x="247.5" y="323.5" width="484.5" height="1.5" fill="#000070"/>
 <rect x="247.5" y="311" width="1" height="80" fill="#303050"/>
 <rect x="731" y="311" width="1" height="80" fill="#303050"/>
 <!-- header icons block 2 -->
 <g transform="translate(427 231.5)"><rect x="0" y="0" width="8" height="5.5" fill="#102030"/><rect x="1" y="1" width="2" height="4" fill="#d8e040"/><rect x="3" y="1" width="2" height="4" fill="#40c8a0"/><rect x="5" y="1" width="2" height="4" fill="#6040c0"/></g>
 <g transform="translate(441 231.5)"><rect x="0" y="3" width="8" height="2.5" fill="#203080"/><rect x="3" y="0.5" width="4" height="2.5" fill="#e0d060"/><rect x="0" y="2" width="1" height="4" fill="#203080"/><rect x="7" y="2" width="1" height="4" fill="#203080"/></g>
 <g transform="translate(455 231.5)"><rect x="0" y="0.5" width="7.5" height="5.5" fill="#a0b8d8"/><path d="M1 1 L3.5 4 L6.5 1" stroke="#e090a0" stroke-width="1" fill="none"/></g>
 <g transform="translate(252 315)"><rect x="0" y="0" width="8" height="5.5" fill="#102030"/><rect x="1" y="1" width="2" height="4" fill="#d8e040"/><rect x="3" y="1" width="2" height="4" fill="#40c8a0"/><rect x="5" y="1" width="2" height="4" fill="#6040c0"/></g>
 <g transform="translate(265 315)"><rect x="0" y="3" width="8" height="2.5" fill="#203080"/><rect x="3" y="0.5" width="4" height="2.5" fill="#e0d060"/><rect x="0" y="2" width="1" height="4" fill="#203080"/><rect x="7" y="2" width="1" height="4" fill="#203080"/></g>
 <g transform="translate(278 315)"><rect x="0" y="0.5" width="7.5" height="5.5" fill="#a0b8d8"/><path d="M1 1 L3.5 4 L6.5 1" stroke="#e090a0" stroke-width="1" fill="none"/></g>
 <rect x="354" y="370" width="7" height="11" fill="#e00000"/>
 <rect x="552.5" y="254.5" width="1.5" height="11" fill="#ffffff"/>
</svg>

<div class="a g" style="left:422.5px;top:127.9px">loc_411740:
mov     eax, [esi+<span class="c">4</span>]
mov     frame, [eax+edi]
add     eax, edi
mov     v, <span class="c">0CCCCCCCCh</span>
cmp     [frame+ebx-<span class="c">4</span>], v
jnz     short loc_41175D</div>
<div class="a g" style="left:425.2px;top:243.4px">mov     eax, [eax+<span class="c">4</span>]
add     eax, frame
cmp     [eax+ebx], v
jz      short loc_411776</div>
<div class="a g" style="left:249.4px;top:327.4px;height:57.5px;overflow:hidden">
loc_41175D:
mov     frame, [esi+<span class="c">4</span>]
mov     v, [edi+frame+<span class="c">8</span>]
mov     eax, [ebp+<span style="color:#200000">4</span>]
mov     eax, [eax]</div>
<!-- graph status -->
<div class="a" style="left:202px;top:384px;width:796px;height:16px;background:#f0f0f0"></div>
<div class="a" style="left:203px;top:384px;width:1px;height:12px;background:#808080"></div>
<div class="a" style="left:204px;top:384px;width:383px;height:1px;background:#d0d0d8"></div>
<div class="a" style="left:204px;top:385px;width:383px;height:10px;background:#f6f6f6"></div>
<div class="a sfs" style="left:243px"></div>
<div class="a sfs" style="left:293px"></div>
<div class="a sfs" style="left:333px"></div>
<div class="a sfs" style="left:380px"></div>
<div class="a mono st" style="left:204px;top:386px">100.00%</div>
<div class="a mono st" style="left:246px;top:386px">(189,615)</div>
<div class="a mono st" style="left:296px;top:386px">(42,45)</div>
<div class="a mono st" style="left:335px;top:386px">00000B56</div>
<div class="a mono st" style="left:381px;top:386px">00411756:  RTC CheckStackVars2(x,x,x)+36</div>
<!-- OUTPUT WINDOW -->
<div class="a" style="left:1px;top:400px;width:997px;height:135px;background:#f0f0f0"></div>
<div class="a" style="left:2px;top:399px;width:996px;height:1px;background:#e0e0e0"></div>
<div class="a" style="left:2px;top:402px;width:995px;height:14.5px;background:#d9d9d9"></div>
<div class="a" style="left:969px;top:402px;width:14px;height:14.5px;background:#e2e2e2"></div>
<div class="a" style="left:983px;top:402px;width:14px;height:14.5px;background:#e6e6e6"></div>
<svg class="a" style="left:4px;top:403px" width="13" height="13" viewBox="0 0 13 13">
 <rect x="0.5" y="0.5" width="11" height="11.5" fill="#f2f6fa" stroke="#90a8c4" stroke-width="1"/>
 <rect x="1" y="1" width="10" height="2" fill="#3a78c8"/>
 <path d="M2.5 5.5 L9.5 5.5 M2.5 7.5 L9.5 7.5 M2.5 9.5 L9.5 9.5" stroke="#8898b0" stroke-width="1.1"/>
</svg>
<div class="a ui sx" style="left:19px;top:404px;font-size:9.4px;line-height:12px;color:#3c3c3c">Output window</div>
<svg class="a" style="left:972px;top:405px" width="8" height="8" viewBox="0 0 8 8"><path d="M3.2 2.6 L3.2 0.8 L6.6 0.8 L6.6 4.6 L5.4 4.6" fill="none" stroke="#222" stroke-width="1.1"/><rect x="0.9" y="3.2" width="4.6" height="3.9" fill="#fff" stroke="#111" stroke-width="1.2"/><rect x="0.9" y="2.8" width="4.6" height="1.3" fill="#111"/></svg>
<svg class="a" style="left:987px;top:406px" width="7" height="7" viewBox="0 0 7 7"><path d="M0.6 0.8 L6.2 6 M6.2 0.8 L0.6 6" stroke="#1a1a1a" stroke-width="1.35"/></svg>
<div class="a" style="left:2px;top:418px;width:996px;height:1px;background:#8c8c8c"></div>
<div class="a" style="left:2px;top:419px;width:984px;height:90px;background:#fff;overflow:hidden">
<div class="a" style="left:4.5px;top:10px;width:440px;height:1px;background:repeating-linear-gradient(90deg,#3a3a3a 0 3.9px,transparent 3.9px 5.12px)"></div>
<div class="a" style="left:4.5px;top:41px;width:440px;height:1px;background:repeating-linear-gradient(90deg,#3a3a3a 0 3.9px,transparent 3.9px 5.12px)"></div>
<div class="a mono out" style="left:3px;top:-3.5px;line-height:10.1px;font-size:7.7px;transform:scaleX(1.108);transform-origin:0 0">Xdebug: No saved Xdebug state data was found.

Python 2.6.6 (r266:84297, Aug 24 2010, 18:46:32) [MSC v.1500 32 bit (Intel)]
IDAPython v1.5.0 final (serial 0) (c) The IDAPython Team &lt;idapython@googlegroups.com&gt;

Using FLIRT signature: SEH for vc7/8
Propagating type information...
Function argument information has been propagated
The initial autoanalysis has been finished.</div>
</div>
<div class="a" style="left:986px;top:419px;width:12px;height:90px;background:#f4f4f4"></div>
<div class="a" style="left:986px;top:420px;width:11px;height:12px;background:#f0f0f0;border-right:1px solid #8a8a8a;border-bottom:1px solid #8a8a8a"></div>
<svg class="a" style="left:988px;top:424px" width="7" height="4"><path d="M0 3.5 L7 3.5 L3.5 0Z" fill="#000"/></svg>
<div class="a" style="left:986px;top:487px;width:11px;height:10px;background:#f0f0f0;border-right:1px solid #8a8a8a;border-bottom:1px solid #8a8a8a"></div>
<div class="a" style="left:986px;top:497px;width:11px;height:12px;background:#f0f0f0;border-right:1px solid #8a8a8a;border-bottom:1px solid #8a8a8a"></div>
<svg class="a" style="left:988px;top:501px" width="7" height="4"><path d="M0 0 L7 0 L3.5 3.5Z" fill="#000"/></svg>
<!-- python input -->
<div class="a ui" style="left:5px;top:513px;font-size:9.4px;line-height:12px;color:#222;transform:scaleX(0.87);transform-origin:0 0">Python</div>
<div class="a" style="left:36px;top:511px;width:962px;height:13px;background:#fff;border-top:2px solid #a0a0a0;border-left:2px solid #a0a0a0"></div>
<!-- status bar -->
<div class="a" style="left:1px;top:528px;width:997px;height:1px;background:#d4d4d4"></div>
<div class="a" style="left:1px;top:529px;width:997px;height:6px;background:#f0f0f0;overflow:hidden">
 <div class="a mono out" style="left:3px;top:0.5px;font-size:7.7px;transform:scaleX(1.108);transform-origin:0 0">AU:  idle</div>
 <div class="a mono out" style="left:61px;top:0.5px;font-size:7.7px;transform:scaleX(1.108);transform-origin:0 0">Down</div>
 <div class="a mono out" style="left:119px;top:0.5px;font-size:7.7px;transform:scaleX(1.108);transform-origin:0 0">Disk: 29GB</div>
 <div class="a" style="left:57px;top:0;width:2px;height:7px;background:#d0d0d0"></div>
 <div class="a" style="left:114px;top:0;width:2px;height:7px;background:#d0d0d0"></div>
 <div class="a" style="left:169px;top:0;width:2px;height:7px;background:#d0d0d0"></div>
</div>

<div class="a" style="left:0;top:0;width:1000px;height:1px;background:#000"></div>
<div class="a" style="left:0;top:0;width:1px;height:536px;background:#000"></div>
<div class="a" style="left:998px;top:17px;width:1px;height:519px;background:#f8f8f8"></div>
<div class="a" style="left:999px;top:0;width:1px;height:536px;background:#000"></div>
<div class="a" style="left:1px;top:534px;width:998px;height:1px;background:#fafafa"></div>
<div class="a" style="left:0;top:535px;width:1000px;height:1px;background:#000"></div>
</body></html>
